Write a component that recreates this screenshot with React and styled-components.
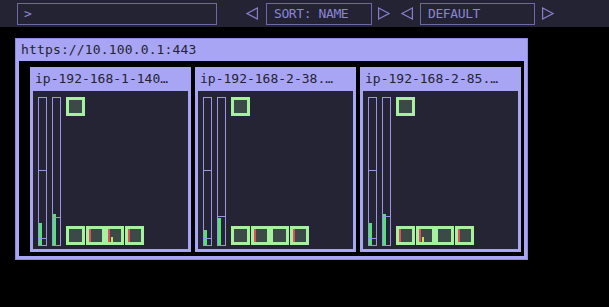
import React from 'react';
import styled, { createGlobalStyle } from 'styled-components';

const GlobalStyle = createGlobalStyle`
  html, body {
    margin: 0;
    padding: 0;
    background: #000;
  }
  body {
    font-family: "DejaVu Sans Mono", "Liberation Mono", monospace;
  }
`;

const nodes = [
  {
    name: 'ip-192-168-1-140…',
    bars: [
      { fill: 22, marks: [74, 6] },
      { fill: 31, marks: [27] },
    ],
    slots: [{}, { red: true }, { red: true, warn: true }, { red: true }],
  },
  {
    name: 'ip-192-168-2-38.…',
    bars: [
      { fill: 15, marks: [74, 6] },
      { fill: 27, marks: [28] },
    ],
    slots: [{}, { red: true }, {}, { red: true }],
  },
  {
    name: 'ip-192-168-2-85.…',
    bars: [
      { fill: 22, marks: [74, 6] },
      { fill: 31, marks: [28] },
    ],
    slots: [{ red: true }, { red: true, warn: true }, {}, { red: true }],
  },
];

const Arrow = ({ dir }) => (
  <ArrowIcon width="12" height="13" viewBox="0 0 12 13">
    {dir === 'left' ? (
      <polygon points="1,6.5 11.4,1 11.4,12" fill="none" stroke="#8480cc" strokeWidth="1.2" />
    ) : (
      <polygon points="11,6.5 0.6,1 0.6,12" fill="none" stroke="#8480cc" strokeWidth="1.2" />
    )}
  </ArrowIcon>
);

const Gauge = ({ fill, marks }) => (
  <GaugeTrack>
    <GaugeFill style={{ height: fill }} />
    {marks.map((m, i) => (
      <GaugeMark key={i} style={{ bottom: m }} />
    ))}
  </GaugeTrack>
);

const Slot = ({ red, warn }) => (
  <SlotBox>
    {red && <RedEdge />}
    {warn && <WarnBar />}
  </SlotBox>
);

const NodeCard = ({ node }) => (
  <Card>
    <CardHeader>{node.name}</CardHeader>
    <CardBody>
      {node.bars.map((b, i) => (
        <Gauge key={i} {...b} />
      ))}
      <SlotColumn>
        <SlotRow>
          <Slot />
        </SlotRow>
        <SlotRow>
          {node.slots.map((s, i) => (
            <Slot key={i} {...s} />
          ))}
        </SlotRow>
      </SlotColumn>
    </CardBody>
  </Card>
);

const App = () => {
  return (
    <>
      <GlobalStyle />
      <TopBar>
        <SearchBox>&gt;</SearchBox>
        <ArrowSlot $left={29}>
          <Arrow dir="left" />
        </ArrowSlot>
        <SelectBox $width={106} $left={8}>SORT: NAME</SelectBox>
        <ArrowSlot $left={6}>
          <Arrow dir="right" />
        </ArrowSlot>
        <ArrowSlot $left={11}>
          <Arrow dir="left" />
        </ArrowSlot>
        <SelectBox $width={115} $left={7}>DEFAULT</SelectBox>
        <ArrowSlot $left={7}>
          <Arrow dir="right" />
        </ArrowSlot>
      </TopBar>
      <Main>
        <ClusterPanel>
          <ClusterTitle>https://10.100.0.1:443</ClusterTitle>
          <ClusterBody>
            {nodes.map((n) => (
              <NodeCard key={n.name} node={n} />
            ))}
          </ClusterBody>
        </ClusterPanel>
      </Main>
    </>
  );
};

export default App;

const TopBar = styled.div`
  height: 27px;
  background: #232333;
  display: flex;
  align-items: center;
  padding-left: 17px;
  box-sizing: border-box;
`;

const SearchBox = styled.div`
  width: 200px;
  height: 22px;
  box-sizing: border-box;
  border: 1px solid #6c68ac;
  color: #8a86d4;
  font-size: 13px;
  line-height: 20px;
  padding-left: 6px;
`;

const ArrowSlot = styled.div`
  margin-left: ${(p) => p.$left}px;
  display: flex;
  align-items: center;
`;

const ArrowIcon = styled.svg`
  display: block;
`;

const SelectBox = styled.div`
  width: ${(p) => p.$width}px;
  margin-left: ${(p) => p.$left}px;
  height: 22px;
  box-sizing: border-box;
  border: 1px solid #6c68ac;
  color: #8a86d4;
  font-size: 13px;
  letter-spacing: -0.4px;
  line-height: 20px;
  padding-left: 7px;
`;

const Main = styled.div`
  padding: 11px 0 0 15px;
`;

const ClusterPanel = styled.div`
  width: 513px;
  height: 222px;
  box-sizing: border-box;
  background: #a9a5f5;
  border: 1px solid #8e8ada;
  padding: 0 3px 3px 3px;
  display: flex;
  flex-direction: column;
`;

const ClusterTitle = styled.div`
  height: 22px;
  line-height: 22px;
  padding-left: 2px;
  font-size: 13px;
  letter-spacing: 0.15px;
  color: #23232f;
`;

const ClusterBody = styled.div`
  flex: 1;
  background: #000;
  display: flex;
  gap: 4px;
  padding: 6px 0 0 11px;
`;

const Card = styled.div`
  width: 161px;
  height: 185px;
  box-sizing: border-box;
  background: #a9a5f5;
  padding: 0 3px 3px 3px;
  display: flex;
  flex-direction: column;
`;

const CardHeader = styled.div`
  height: 24px;
  line-height: 24px;
  padding-left: 2px;
  font-size: 13px;
  color: #23232f;
  white-space: nowrap;
  overflow: hidden;
`;

const CardBody = styled.div`
  flex: 1;
  background: #242434;
  display: flex;
  gap: 5px;
  padding: 6px 0 3px 5px;
`;

const GaugeTrack = styled.div`
  position: relative;
  width: 9px;
  box-sizing: border-box;
  border: 1px solid #9a96e6;
`;

const GaugeFill = styled.div`
  position: absolute;
  left: 0;
  bottom: 0;
  width: 3px;
  background: #55e07a;
`;

const GaugeMark = styled.div`
  position: absolute;
  left: 0;
  right: 0;
  height: 1px;
  background: #9a96e6;
`;

const SlotColumn = styled.div`
  display: flex;
  flex-direction: column;
  justify-content: space-between;
  padding-bottom: 1px;
`;

const SlotRow = styled.div`
  display: flex;
  gap: 0.6px;
`;

const SlotBox = styled.div`
  position: relative;
  width: 19px;
  height: 19px;
  box-sizing: border-box;
  border: 3px solid #a6f0a0;
  background: #3c4a47;
`;

const RedEdge = styled.div`
  position: absolute;
  left: 0;
  top: 0;
  bottom: 0;
  width: 2px;
  background: #e0505c;
`;

const WarnBar = styled.div`
  position: absolute;
  left: 3px;
  bottom: 0;
  width: 2px;
  height: 5px;
  background: #c8e05a;
`;
